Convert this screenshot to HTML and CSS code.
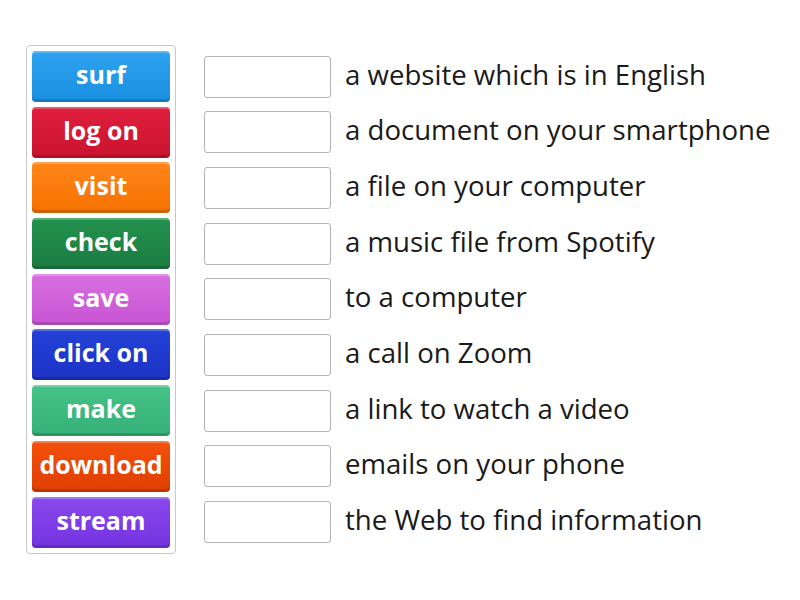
FILE: index.html
```html
<!DOCTYPE html>
<html>
<head>
  <title>Match up</title>
  <link rel="stylesheet" href="styles.css">
</head>
<body>
  <div class="board">
    <div class="tiles">
      <div class="tile blue">surf</div>
      <div class="tile red">log on</div>
      <div class="tile orange">visit</div>
      <div class="tile green">check</div>
      <div class="tile pink">save</div>
      <div class="tile navy">click on</div>
      <div class="tile mint">make</div>
      <div class="tile fire">download</div>
      <div class="tile purple">stream</div>
    </div>
    <div class="targets">
      <div class="row"><div class="slot"></div><span class="clue">a website which is in English</span></div>
      <div class="row"><div class="slot"></div><span class="clue">a document on your smartphone</span></div>
      <div class="row"><div class="slot"></div><span class="clue">a file on your computer</span></div>
      <div class="row"><div class="slot"></div><span class="clue">a music file from Spotify</span></div>
      <div class="row"><div class="slot"></div><span class="clue">to a computer</span></div>
      <div class="row"><div class="slot"></div><span class="clue">a call on Zoom</span></div>
      <div class="row"><div class="slot"></div><span class="clue">a link to watch a video</span></div>
      <div class="row"><div class="slot"></div><span class="clue">emails on your phone</span></div>
      <div class="row"><div class="slot"></div><span class="clue">the Web to find information</span></div>
    </div>
  </div>
</body>
</html>
```

FILE: styles.css
```css
* {
  box-sizing: border-box;
}

body {
  margin: 0;
  padding: 0;
  background-color: #fff;
  font-family: "Open Sans", Arial, sans-serif;
}

.board {
  display: flex;
  align-items: flex-start;
  padding: 45px 0 0 26px;
}

.tiles {
  width: 150px;
  padding: 5px;
  border: 1px solid #c8c8c8;
  border-radius: 4px;
  display: flex;
  flex-direction: column;
  gap: 4.7px;
}

.tile {
  height: 51px;
  padding-bottom: 5px;
  border-radius: 4px;
  color: #fff;
  font-weight: bold;
  font-size: 25px;
  display: flex;
  align-items: center;
  justify-content: center;
  white-space: nowrap;
  box-shadow: inset 0 2px 0 rgba(255, 255, 255, 0.25), inset 0 -3px 0 rgba(0, 0, 0, 0.15);
}

.blue   { background: linear-gradient(#2ea3ef, #1a8fe0); }
.red    { background: linear-gradient(#e01f3d, #c8132e); }
.orange { background: linear-gradient(#ff8519, #f57200); }
.green  { background: linear-gradient(#23914e, #1b7c40); }
.pink   { background: linear-gradient(#d86fe0, #c854d4); }
.navy   { background: linear-gradient(#2342d8, #1c32c4); }
.mint   { background: linear-gradient(#45c388, #36b077); }
.fire   { background: linear-gradient(#f4500c, #de3f00); }
.purple { background: linear-gradient(#8a48ec, #7333e0); }

.targets {
  margin-left: 28px;
  padding-top: 6px;
  display: flex;
  flex-direction: column;
  gap: 4.7px;
}

.row {
  height: 51px;
  display: flex;
  align-items: center;
}

.slot {
  width: 127px;
  height: 42px;
  border: 1px solid #b4b4b4;
  border-radius: 3px;
  background-color: #fff;
}

.clue {
  margin-left: 14px;
  padding-bottom: 6px;
  font-size: 27.6px;
  color: #1a1a1a;
  white-space: nowrap;
}
```
